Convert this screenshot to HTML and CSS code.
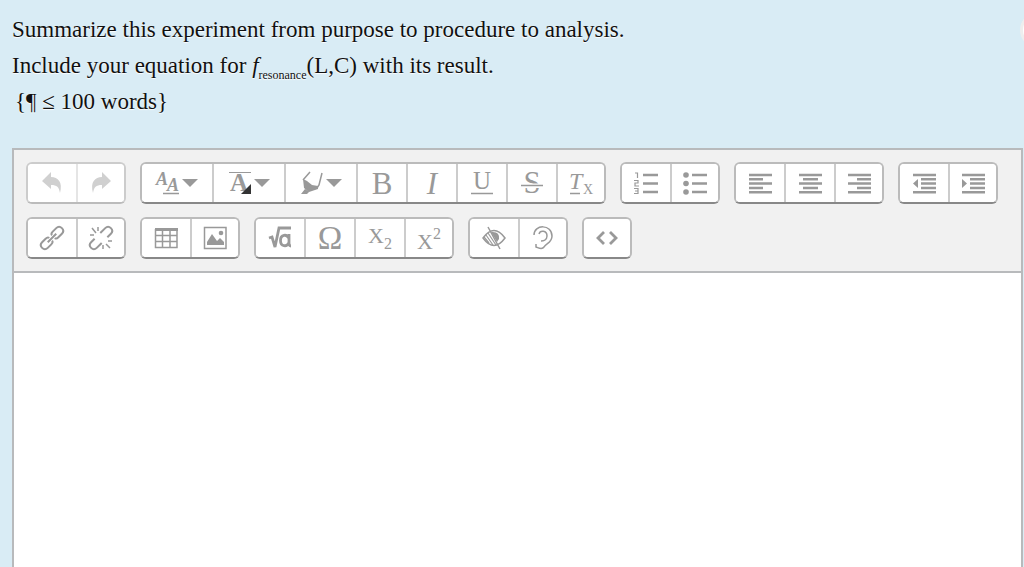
FILE: index.html
```html
<!DOCTYPE html>
<html lang="en">
<head>
    <meta charset="utf-8">
    <meta name="viewport" content="width=device-width, initial-scale=1">
    <title>Experiment summary</title>
    <link rel="stylesheet" href="styles.css">
</head>
<body>
    <main class="question">
        <button class="side-toggle" type="button" aria-label="Toggle side panel"></button>

        <div class="prompt" id="prompt">
            <p>Summarize this experiment from purpose to procedure to analysis.</p>
            <p>Include your equation for <i>f</i><sub>resonance</sub>(L,C) with its result.</p>
            <p class="limit">{¶ ≤ 100 words}</p>
        </div>

        <div class="editor">
            <div class="toolbar" role="toolbar" aria-label="Formatting">
                <div class="group group-disabled">
                    <button class="btn" type="button" aria-label="Undo" disabled>
                        <svg class="icon" viewBox="0 0 24 24"><path d="M2 10L11 1V6C18 6 23 11 20 22C19 16 17 14 11 14V18Z"/></svg>
                    </button>
                    <button class="btn" type="button" aria-label="Redo" disabled>
                        <svg class="icon" viewBox="0 0 24 24"><path d="M22 10L13 1V6C6 6 1 11 4 22C5 16 7 14 13 14V18Z"/></svg>
                    </button>
                </div>

                <div class="group">
                    <button class="btn btn-menu" type="button" aria-label="Font size">
                        <svg class="icon" viewBox="0 0 24 24"><text class="serif bold italic" x="0" y="14" font-size="18">A</text><text class="serif bold italic" x="11" y="20" font-size="18">A</text><path class="line thin" d="M7 22.500H23"/></svg>
                        <svg class="caret" viewBox="0 0 16 8"><path d="M0 0H16L8 8Z"/></svg>
                    </button>
                    <button class="btn btn-menu" type="button" aria-label="Text colour">
                        <svg class="icon" viewBox="0 0 24 24"><text class="serif bold" x="2" y="20" font-size="25">A</text><path class="line hair" d="M1 1.500H23"/><path class="swatch" d="M23 13V23H13Z"/></svg>
                        <svg class="caret" viewBox="0 0 16 8"><path d="M0 0H16L8 8Z"/></svg>
                    </button>
                    <button class="btn btn-menu" type="button" aria-label="Highlight colour">
                        <svg class="icon" viewBox="0 0 24 24"><path d="M3 8L7 10L12 14L18 15V18L9 21L4 17ZM5 18L9 21L7 23H1Z"/><path class="line thin" d="M3 9L10 1M17 17L19 14L22 2"/></svg>
                        <svg class="caret" viewBox="0 0 16 8"><path d="M0 0H16L8 8Z"/></svg>
                    </button>
                    <button class="btn" type="button" aria-label="Bold">
                        <svg class="icon" viewBox="0 0 24 24"><text class="serif" x="12" y="23" font-size="31" text-anchor="middle">B</text></svg>
                    </button>
                    <button class="btn" type="button" aria-label="Italic">
                        <svg class="icon" viewBox="0 0 24 24"><text class="serif italic" x="12" y="23" font-size="31" text-anchor="middle">I</text></svg>
                    </button>
                    <button class="btn" type="button" aria-label="Underline">
                        <svg class="icon" viewBox="0 0 24 24"><text class="serif" x="12" y="18" font-size="25" text-anchor="middle">U</text><path class="line thin" d="M1 22.500H23"/></svg>
                    </button>
                    <button class="btn" type="button" aria-label="Strikethrough">
                        <svg class="icon" viewBox="0 0 24 24"><text class="serif" x="12" y="22" font-size="31" text-anchor="middle">S</text><path class="gap" d="M1 12.500H23V17H1Z"/><path class="line thin" d="M1 14.500H23"/></svg>
                    </button>
                    <button class="btn" type="button" aria-label="Clear formatting">
                        <svg class="icon" viewBox="0 0 24 24"><text class="serif italic" x="0" y="18" font-size="24">T</text><text class="serif" x="14" y="23" font-size="14">X</text><path class="line thin" d="M1 22.500H11"/></svg>
                    </button>
                </div>

                <div class="group">
                    <button class="btn" type="button" aria-label="Numbered list">
                        <svg class="icon" viewBox="0 0 24 24"><path class="line mark" d="M1 2H3.500V7M0 9.500H4V12H1V15H5M0 17.500H4V22.500H0M1 20H4"/><path class="line" d="M9 4H24M9 12.500H24M9 21H24"/></svg>
                    </button>
                    <button class="btn" type="button" aria-label="Bulleted list">
                        <svg class="icon" viewBox="0 0 24 24"><circle cx="3" cy="4" r="2.800"/><circle cx="3" cy="12.500" r="2.800"/><circle cx="3" cy="21" r="2.800"/><path class="line" d="M9 4H24M9 12.500H24M9 21H24"/></svg>
                    </button>
                </div>

                <div class="group">
                    <button class="btn" type="button" aria-label="Align left">
                        <svg class="icon" viewBox="0 0 24 24"><path class="line" d="M1 4H24M1 8.300H15M1 12.600H24M1 16.900H15M1 21.200H24"/></svg>
                    </button>
                    <button class="btn" type="button" aria-label="Align centre">
                        <svg class="icon" viewBox="0 0 24 24"><path class="line" d="M1 4H24M5 8.300H20M1 12.600H24M5 16.900H20M1 21.200H24"/></svg>
                    </button>
                    <button class="btn" type="button" aria-label="Align right">
                        <svg class="icon" viewBox="0 0 24 24"><path class="line" d="M1 4H24M10 8.300H24M1 12.600H24M10 16.900H24M1 21.200H24"/></svg>
                    </button>
                </div>

                <div class="group">
                    <button class="btn" type="button" aria-label="Outdent">
                        <svg class="icon" viewBox="0 0 24 24"><path class="line" d="M1 4H24M9 8.300H24M9 12.600H24M9 16.900H24M1 21.200H24"/><path d="M1 12.600L6 8V17Z"/></svg>
                    </button>
                    <button class="btn" type="button" aria-label="Indent">
                        <svg class="icon" viewBox="0 0 24 24"><path class="line" d="M1 4H24M9 8.300H24M9 12.600H24M9 16.900H24M1 21.200H24"/><path d="M6 12.600L1 8V17Z"/></svg>
                    </button>
                </div>

                <div class="group">
                    <button class="btn" type="button" aria-label="Link">
                        <svg class="icon" viewBox="0 0 24 24"><path class="line chain" transform="rotate(-45 12 12)" d="M10 14Q10 16 7 16H2Q-2 16-2 12T2 8H7Q10 8 10 10M14 10Q14 8 17 8H22Q26 8 26 12T22 16H17Q14 16 14 14M6 12H18"/></svg>
                    </button>
                    <button class="btn" type="button" aria-label="Unlink">
                        <svg class="icon" viewBox="0 0 24 24"><path class="line chain" transform="rotate(-45 12 12)" d="M9 16H2Q-2 16-2 12T2 8H7M17 16H22Q26 16 26 12T22 8H15"/><path class="line thin" d="M9 1V5M3 2L7 7M1 9H5M19 15H23M17 18L21 22M14 19V23"/></svg>
                    </button>
                </div>

                <div class="group">
                    <button class="btn" type="button" aria-label="Table">
                        <svg class="icon" viewBox="0 0 24 24"><path class="line thin" d="M1.500 3V21.500H23V3M1.500 9.500H23M1.500 15.500H23M8.500 3V21M16 3V21"/><path d="M1 2H24V5H1Z"/></svg>
                    </button>
                    <button class="btn" type="button" aria-label="Image">
                        <svg class="icon" viewBox="0 0 24 24"><path class="line thin" d="M1.500 1.500H23V22.500H1.500Z"/><path d="M4 19V16L9 8L14 15L17 12L21 16V19Z"/><circle cx="18" cy="7" r="2.300"/></svg>
                    </button>
                </div>

                <div class="group">
                    <button class="btn" type="button" aria-label="Equation">
                        <svg class="icon" viewBox="0 0 24 24"><path class="line root" d="M1 12L4 11L7 21L11 2H23"/><path class="line root" d="M21 8V17Q21 20 23 20M20.500 12C19 8 12.500 8 12.500 14.500C12.500 21 19 21 20.500 17"/></svg>
                    </button>
                    <button class="btn" type="button" aria-label="Special character">
                        <svg class="icon" viewBox="0 0 24 24"><text class="serif" x="12" y="23" font-size="33" text-anchor="middle">Ω</text></svg>
                    </button>
                    <button class="btn" type="button" aria-label="Subscript">
                        <svg class="icon" viewBox="0 0 24 24"><text class="serif" x="0" y="17" font-size="22">X</text><text class="serif" x="16" y="23" font-size="16">2</text></svg>
                    </button>
                    <button class="btn" type="button" aria-label="Superscript">
                        <svg class="icon" viewBox="0 0 24 24"><text class="serif" x="0" y="23" font-size="22">X</text><text class="serif" x="16" y="13" font-size="16">2</text></svg>
                    </button>
                </div>

                <div class="group">
                    <button class="btn" type="button" aria-label="Accessibility checker">
                        <svg class="icon" viewBox="0 0 24 24"><path class="line thin" d="M1 12Q12-3 23 12Q12 27 1 12ZM6 1L18 23"/><path class="line mark" d="M2 11L7 17M4 9L11 19M6 7L14 19"/><path d="M9 6Q18 5 17 13L15 16Z"/></svg>
                    </button>
                    <button class="btn" type="button" aria-label="Screenreader helper">
                        <svg class="icon" viewBox="0 0 24 24"><path class="line thin" d="M3 9C3-2 21-2 21 10C21 17 15 17 13 21C11 24 8 22 5 21V18M8 8C9 4 16 4 16 10C16 14 12 15 10 15"/></svg>
                    </button>
                </div>

                <div class="group">
                    <button class="btn" type="button" aria-label="HTML">
                        <svg class="icon" viewBox="0 0 24 24"><path class="line root" d="M9 6L3 12L9 18M15 6L21 12L15 18"/></svg>
                    </button>
                </div>
            </div>
            <textarea class="answer" aria-labelledby="prompt"></textarea>
        </div>
    </main>
</body>
</html>
```
FILE: styles.css
```css
* {
    margin: 0;
    padding: 0;
    box-sizing: border-box;
}

body {
    background: #d9ecf5;
    color: #111;
    font-family: "Liberation Serif", "Times New Roman", serif;
}

.question {
    position: relative;
    display: flex;
    flex-direction: column;
    min-height: 100vh;
    padding: 12px 1px 0 12px;
    overflow: hidden;
}

.side-toggle {
    position: absolute;
    top: 12px;
    right: -32px;
    width: 36px;
    height: 36px;
    border: 3px solid #eee;
    border-radius: 50%;
    background: #fff;
}

.prompt {
    margin-bottom: 28px;
    font-size: 23px;
    line-height: 36px;
    text-shadow: 0 1px 1px #fff;
}

.prompt sub {
    font-size: 12px;
    line-height: 0;
}

.limit {
    padding-left: 3px;
}

.editor {
    display: flex;
    flex: 1;
    flex-direction: column;
    border: 2px solid #b8babc;
    border-bottom: 0;
}

.toolbar {
    display: flex;
    flex-wrap: wrap;
    gap: 13px 14px;
    padding: 12px;
    border-bottom: 2px solid #b8babc;
    background: #f1f1f1;
}

.group {
    display: flex;
    border: 2px solid #bbb;
    border-bottom-color: #888;
    border-radius: 6px;
    background: #fff;
    overflow: hidden;
}

.btn {
    display: flex;
    align-items: center;
    justify-content: center;
    width: 50px;
    height: 38px;
    border: 0;
    border-left: 2px solid #ccc;
    background: #fff;
    color: #999;
}

.btn:first-child {
    width: 48px;
    border-left: 0;
}

.btn:last-child {
    width: 48px;
}

.btn:only-child {
    width: 46px;
}

.btn-menu {
    gap: 2px;
    width: 72px;
}

.btn-menu:first-child {
    width: 70px;
}

.group-disabled {
    border-color: #ccc;
    border-bottom-color: #bbb;
}

.group-disabled .btn {
    border-color: #e5e5e5;
    color: #d0d0d0;
}

.icon {
    flex: none;
    width: 24px;
    height: 24px;
    fill: currentColor;
    overflow: visible;
}

.caret {
    flex: none;
    width: 16px;
    height: 8px;
    fill: currentColor;
}

.serif {
    font-family: "Liberation Serif", serif;
}

.bold {
    font-weight: bold;
}

.italic {
    font-style: italic;
}

.line {
    fill: none;
    stroke: currentColor;
    stroke-width: 2.5;
}

.chain {
    stroke-width: 2;
}

.thin {
    stroke-width: 1.5;
}

.mark {
    stroke-width: 1.2;
}

.hair {
    stroke-width: 1;
}

.root {
    stroke-width: 2.8;
}

.gap {
    fill: #fff;
}

.swatch {
    fill: #333;
}

.answer {
    flex: 1;
    width: 100%;
    padding: 12px;
    border: 0;
    outline: 0;
    background: #fff;
    font: inherit;
    font-size: 23px;
    resize: none;
}
```
